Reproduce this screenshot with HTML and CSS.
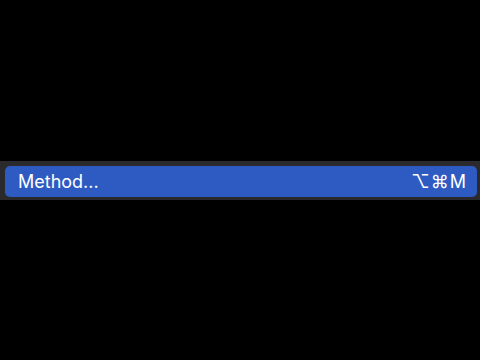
FILE: index.html
```html
<!DOCTYPE html>
<html lang="en">
<head>
  <meta charset="UTF-8">
  <title>Menu</title>
  <link rel="stylesheet" href="styles.css">
</head>
<body>
  <div class="menu">
    <div class="menu-item selected">
      <span class="label">Method...</span>
      <span class="shortcut">⌥⌘M</span>
    </div>
  </div>
</body>
</html>
```

FILE: styles.css
```css
/* page */
html, body {
  margin: 0;
  padding: 0;
  background-color: #000;
}
body {
  font-family: Inter, "Noto Sans", sans-serif;
  padding-top: 161px;
  height: 199px;
  overflow: hidden;
}
/* menu strip */
.menu {
  background-color: #2a292b;
  padding: 5px 3px 3px 5px;
}
.menu-item {
  display: flex;
  align-items: center;
  justify-content: space-between;
  height: 31px;
  padding: 0 10px 0 13px;
  border-radius: 5px;
  color: #fff;
  font-size: 18px;
}
.menu-item.selected {
  background-color: #2e5bc2;
}
.shortcut {
  letter-spacing: 1px;
}
```
